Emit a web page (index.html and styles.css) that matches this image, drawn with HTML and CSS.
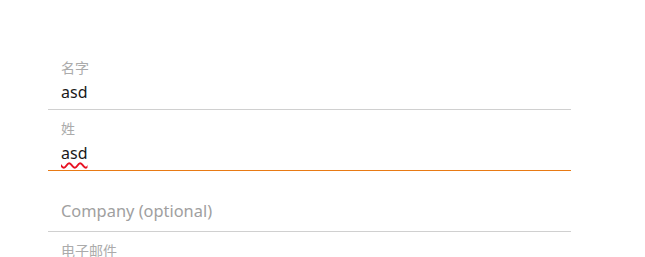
FILE: index.html
```html
<!DOCTYPE html>
<html lang="zh">
<head>
<meta charset="utf-8">
<link rel="stylesheet" href="styles.css">
</head>
<body>
<form class="form">
  <div class="field">
    <div class="label">名字</div>
    <div class="value">asd</div>
  </div>
  <div class="field field--focus">
    <div class="label">姓</div>
    <div class="value"><span class="misspelled">asd</span></div>
  </div>
  <div class="field">
    <div class="label"></div>
    <div class="value placeholder">Company (optional)</div>
  </div>
  <div class="field">
    <div class="label">电子邮件</div>
    <div class="value"></div>
  </div>
</form>
</body>
</html>
```
FILE: styles.css
```css
html, body {
  margin: 0;
  padding: 0;
  background: #ffffff;
}
body {
  font-family: "Noto Sans", "Noto Sans CJK SC", sans-serif;
  overflow: hidden;
  height: 257px;
}
.form {
  width: 523px;
  margin-left: 48px;
  padding-top: 49px;
  display: flex;
  flex-direction: column;
}
.field {
  height: 61px;
  flex: none;
  box-sizing: border-box;
  border-bottom: 1px solid #d0d0d0;
  padding: 9px 13px 0;
  display: flex;
  flex-direction: column;
}
.field--focus {
  border-bottom-color: #e87a14;
}
.label {
  font-family: "Noto Sans CJK SC", sans-serif;
  font-size: 14px;
  line-height: 18px;
  height: 18px;
  color: #ababab;
}
.value {
  font-size: 16px;
  line-height: 24px;
  height: 24px;
  margin-top: 4px;
  color: #1a1a1a;
}
.placeholder {
  margin-top: 1px;
  font-size: 16.4px;
  color: #a0a0a0;
}
.misspelled {
  text-decoration: underline wavy #e81123;
  text-decoration-thickness: 1.5px;
  text-underline-offset: 3px;
}
```
